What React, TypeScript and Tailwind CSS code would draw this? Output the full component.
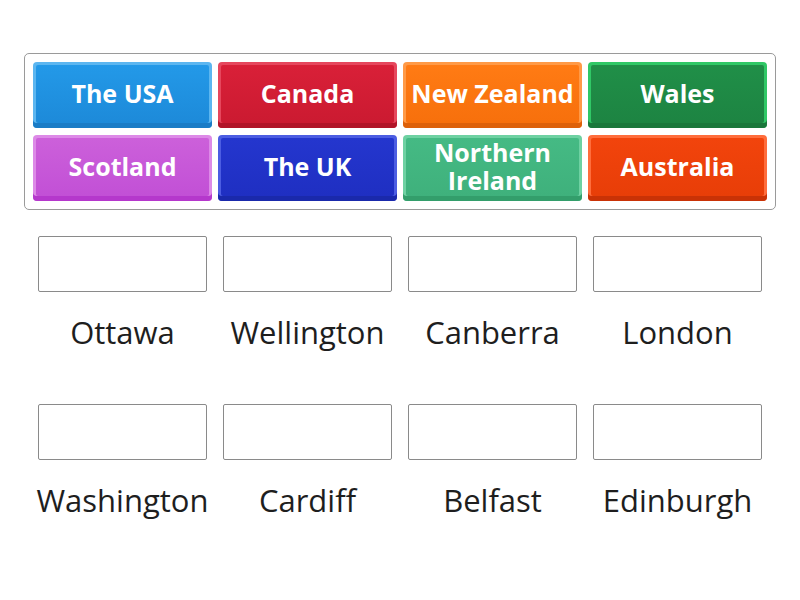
import React from "react";

type Tile = { label: React.ReactNode; rim: string; face: string; bottom: string };

const tiles: Tile[] = [
  { label: "The USA", rim: "bg-[#5cb6f0]", face: "bg-[linear-gradient(#2399e8,#1d8ad9)]", bottom: "shadow-[inset_0_-5px_0_#1a7cc6]" },
  { label: "Canada", rim: "bg-[#e6475d]", face: "bg-[linear-gradient(#d92038,#cb1a31)]", bottom: "shadow-[inset_0_-5px_0_#b11428]" },
  { label: "New Zealand", rim: "bg-[#ff9a47]", face: "bg-[linear-gradient(#ff7b14,#f7700c)]", bottom: "shadow-[inset_0_-5px_0_#dd610a]" },
  { label: "Wales", rim: "bg-[#30c866]", face: "bg-[linear-gradient(#208f48,#1d8442)]", bottom: "shadow-[inset_0_-5px_0_#1a773b]" },
  { label: "Scotland", rim: "bg-[#dd8ae7]", face: "bg-[linear-gradient(#cc60da,#c250d6)]", bottom: "shadow-[inset_0_-5px_0_#b538cc]" },
  { label: "The UK", rim: "bg-[#4c5de2]", face: "bg-[linear-gradient(#2436ce,#1f2fc2)]", bottom: "shadow-[inset_0_-5px_0_#1a29ab]" },
  { label: <>Northern<br />Ireland</>, rim: "bg-[#6ed1a2]", face: "bg-[linear-gradient(#45ba84,#3fb17c)]", bottom: "shadow-[inset_0_-5px_0_#339e6b]" },
  { label: "Australia", rim: "bg-[#ff6d3c]", face: "bg-[linear-gradient(#f2440c,#e83e08)]", bottom: "shadow-[inset_0_-5px_0_#c93206]" },
];

const cities = [
  "Ottawa", "Wellington", "Canberra", "London",
  "Washington", "Cardiff", "Belfast", "Edinburgh",
];

export default function App() {
  return (
    <div
      className="w-[800px] h-[600px] bg-white overflow-hidden"
      style={{ fontFamily: '"Open Sans", "Noto Sans", sans-serif' }}
    >
      <div className="pt-[53px] px-[24px]">
        <div className="border border-[#9a9a9a] rounded-[5px] p-[8px] grid grid-cols-4 gap-x-[6px] gap-y-[7px]">
          {tiles.map((t, i) => (
            <div key={i} className={`h-[66px] rounded-[4px] flex ${t.rim} ${t.bottom}`}>
              <div
                className={`flex-1 mt-[3px] mx-[3px] mb-[5px] rounded-[2px] flex items-center justify-center text-center text-white font-bold text-[25px] leading-[28px] ${t.face}`}
              >
                <span className="-mt-[2px]">{t.label}</span>
              </div>
            </div>
          ))}
        </div>
      </div>
      <div className="mt-[26px] ml-[30px] w-[740px] grid grid-cols-4 gap-y-[51px]">
        {cities.map((c) => (
          <div key={c} className="flex flex-col items-center">
            <div className="w-[169px] h-[56px] border border-[#8a8a8a] rounded-[2px] bg-white" />
            <div className="mt-[21px] h-[40px] leading-[38px] text-[31px] text-[#1e1e1e] whitespace-nowrap">
              {c}
            </div>
          </div>
        ))}
      </div>
    </div>
  );
}
